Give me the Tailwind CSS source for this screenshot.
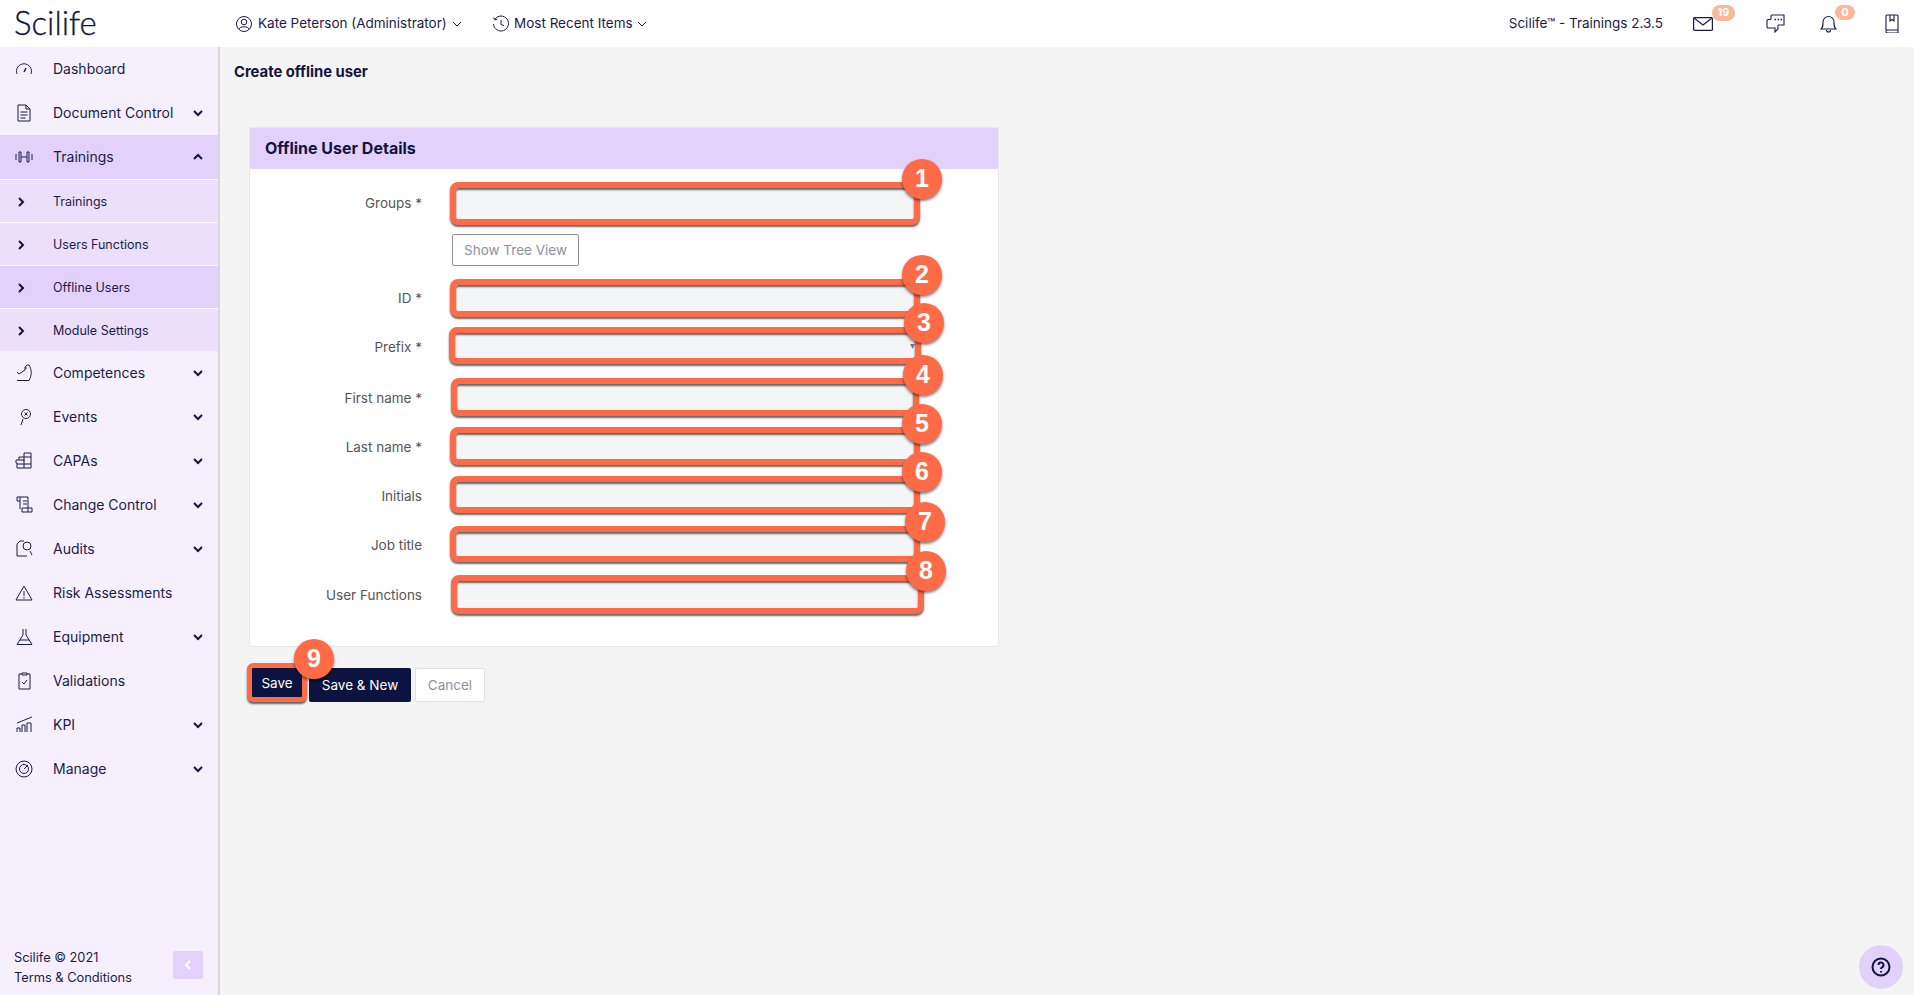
<!DOCTYPE html>
<html lang="en">
<head>
  <meta charset="UTF-8">
  <title>Scilife - Create offline user</title>
  <script src="https://cdn.jsdelivr.net/npm/@tailwindcss/browser@4"></script>
</head>
<body class="h-[995px] w-[1914px] overflow-hidden bg-[#f4f4f4] font-['Inter','Noto_Sans',sans-serif] text-[14px] text-[#1b1b4b]">

  <!-- top bar -->
  <header class="relative flex h-[47px] items-center bg-white">
    <span class="ml-[14px] w-[221px] pb-[3px] font-['Lato',sans-serif] text-[33px] leading-none font-light text-[#0f1338] [-webkit-text-stroke:0.3px_#0f1338]">Scilife</span>

    <svg class="h-[18px] w-[18px]" viewBox="0 0 18 18" fill="none" stroke="#1b1b4b" stroke-width="1"><circle cx="9" cy="9" r="7.5"/><circle cx="9" cy="7" r="2.8"/><path d="M4 14c1-3 9-3 10 0"/></svg>
    <span class="ml-[5px] w-[190px] text-[13.5px] whitespace-nowrap">Kate Peterson (Administrator)</span>
    <svg class="ml-[4px] h-[8px] w-[10px]" viewBox="0 0 10 8" fill="none" stroke="#1b1b4b" stroke-width="1"><path d="M1 2l4 4 4-4"/></svg>

    <svg class="ml-[30px] h-[18px] w-[18px]" viewBox="0 0 18 18" fill="none" stroke="#1b1b4b" stroke-width="1"><path d="M3 4a7.5 7.5 0 1 1-1.5 5"/><path d="M1.5 2.5L3 5l2.5-1"/><path d="M9 5v4.5l3 1"/></svg>
    <span class="ml-[4px] w-[120px] text-[13.5px] whitespace-nowrap">Most Recent Items</span>
    <svg class="ml-[3px] h-[8px] w-[10px]" viewBox="0 0 10 8" fill="none" stroke="#1b1b4b" stroke-width="1"><path d="M1 2l4 4 4-4"/></svg>

    <span class="mr-[30px] ml-auto text-[13.5px] whitespace-nowrap">Scilife™ - Trainings 2.3.5</span>

    <div class="relative mr-[53px] h-[14px] w-[20px]">
      <svg class="h-[14px] w-[20px]" viewBox="0 0 20 14" fill="none" stroke="#1b1b4b" stroke-width="1.2"><rect x=".6" y=".6" width="18.8" height="12.8" rx="1"/><path d="M1 1l9 7 9-7"/></svg>
      <span class="absolute top-[-12px] left-[19px] flex h-[16px] w-[23px] items-center justify-center rounded-full bg-[#fcb69c] text-[11px] font-bold text-white">19</span>
    </div>
    <svg class="mr-[35px] h-[19px] w-[19px]" viewBox="0 0 19 19" fill="none" stroke="#1b1b4b" stroke-width="1.1"><path d="M5 5V2a1 1 0 0 1 1-1h12v10h-6"/><path d="M5 5.5H2a1 1 0 0 0-1 1V13a1 1 0 0 0 1 1h7v4l3-3V11"/><path d="M8.5 5.5H10M11.500 5.5H13M14.5 5.5H16" stroke-width="1.5"/></svg>
    <div class="relative mr-[48px] h-[19px] w-[17px]">
      <svg class="h-[19px] w-[17px]" viewBox="0 0 17 19" fill="none" stroke="#1b1b4b" stroke-width="1.1"><path d="M1 15c2-2 2-3 2-7a5.5 5.5 0 0 1 11 0c0 4 0 5 2 7z"/><path d="M6.5 16a2 2 0 0 0 4 0"/></svg>
      <span class="absolute top-[-9px] left-[15px] flex h-[15px] w-[20px] items-center justify-center rounded-full bg-[#fcb69c] text-[11px] font-bold text-white">0</span>
    </div>
    <svg class="mr-[15px] h-[19px] w-[14px]" viewBox="0 0 14 19" fill="none" stroke="#1b1b4b" stroke-width="1.1"><path d="M1 16V2a1 1 0 0 1 1-1h10a1 1 0 0 1 1 1v14H2.5a1.5 1.5 0 0 0 0 3H13v-3"/><path d="M5 1v6l2-1.500L9 7V1"/></svg>
  </header>

  <div class="flex h-[948px]">
    <!-- sidebar -->
    <aside class="relative w-[220px] shrink-0 border-r-2 border-[#d9d7dc] bg-[#f6f0fe]">
      <nav>
        <a class="flex h-[44px] items-center pb-[1px]">
          <svg class="ml-[15px] h-[16px] w-[18px]" viewBox="0 0 18 16" fill="none" stroke="#1b1b4b" stroke-width="1"><path d="M2 13A7.5 7.5 0 1 1 16 13"/><path d="M9 11l2-4" stroke-width="1.5"/></svg>
          <span class="ml-[20px]">Dashboard</span>
        </a>
        <a class="flex h-[44px] items-center pb-[1px]">
          <svg class="ml-[17px] h-[18px] w-[14px]" viewBox="0 0 14 18" fill="none" stroke="#1b1b4b" stroke-width="1"><path d="M1 1h8l4 4v12H1zM9 1v4h4M3.5 8h7M3.5 11h7M3.5 14h5"/></svg>
          <span class="ml-[22px] w-[140px]">Document Control</span>
          <svg class="h-[8px] w-[10px]" viewBox="0 0 10 8" fill="none" stroke="#10123f" stroke-width="2"><path d="M1 2l4 4 4-4"/></svg>
        </a>
        <a class="flex h-[44px] items-center bg-[#e2d2fb] pb-[1px]">
          <svg class="ml-[15px] h-[12px] w-[18px]" viewBox="0 0 18 12" fill="none" stroke="#1b1b4b" stroke-width="1"><path d="M1 3v6M4 1h2v10H4zM12 1h2v10h-2zM17 3v6M6 6h6"/></svg>
          <span class="ml-[20px] w-[140px]">Trainings</span>
          <svg class="h-[8px] w-[10px]" viewBox="0 0 10 8" fill="none" stroke="#10123f" stroke-width="2"><path d="M1 6l4-4 4 4"/></svg>
        </a>
        <a class="flex h-[43px] items-center border-t border-white/80 bg-[#ecdffb] pt-[2px] text-[12.5px]">
          <svg class="ml-[17px] h-[10px] w-[8px]" viewBox="0 0 8 10" fill="none" stroke="#10123f" stroke-width="2"><path d="M2 1l4 4-4 4"/></svg>
          <span class="ml-[28px]">Trainings</span>
        </a>
        <a class="flex h-[43px] items-center border-t border-white/80 bg-[#ecdffb] pt-[2px] text-[12.5px]">
          <svg class="ml-[17px] h-[10px] w-[8px]" viewBox="0 0 8 10" fill="none" stroke="#10123f" stroke-width="2"><path d="M2 1l4 4-4 4"/></svg>
          <span class="ml-[28px]">Users Functions</span>
        </a>
        <a class="flex h-[43px] items-center border-t border-white/80 bg-[#e2d2fb] pt-[2px] text-[12.5px]">
          <svg class="ml-[17px] h-[10px] w-[8px]" viewBox="0 0 8 10" fill="none" stroke="#10123f" stroke-width="2"><path d="M2 1l4 4-4 4"/></svg>
          <span class="ml-[28px]">Offline Users</span>
        </a>
        <a class="flex h-[43px] items-center border-t border-white/80 bg-[#ecdffb] pt-[2px] text-[12.5px]">
          <svg class="ml-[17px] h-[10px] w-[8px]" viewBox="0 0 8 10" fill="none" stroke="#10123f" stroke-width="2"><path d="M2 1l4 4-4 4"/></svg>
          <span class="ml-[28px]">Module Settings</span>
        </a>
        <a class="flex h-[44px] items-center pb-[1px]">
          <svg class="ml-[16px] h-[18px] w-[17px]" viewBox="0 0 17 18" fill="none" stroke="#1b1b4b" stroke-width="1"><path d="M1 16.5h10M1 8l2 2 3-2 3-2V3l2-2h2M13 1c3 5 3 10 0 15.5h-2M9 4h2"/></svg>
          <span class="ml-[20px] w-[140px]">Competences</span>
          <svg class="h-[8px] w-[10px]" viewBox="0 0 10 8" fill="none" stroke="#10123f" stroke-width="2"><path d="M1 2l4 4 4-4"/></svg>
        </a>
        <a class="flex h-[44px] items-center pb-[1px]">
          <svg class="ml-[19px] h-[18px] w-[12px]" viewBox="0 0 12 18" fill="none" stroke="#1b1b4b" stroke-width="1"><circle cx="7" cy="6" r="4.5"/><path d="M5.5 4.5l3 3M8.5 4.5l-3 3M4 11l-2 6"/></svg>
          <span class="ml-[22px] w-[140px]">Events</span>
          <svg class="h-[8px] w-[10px]" viewBox="0 0 10 8" fill="none" stroke="#10123f" stroke-width="2"><path d="M1 2l4 4 4-4"/></svg>
        </a>
        <a class="flex h-[44px] items-center pb-[1px]">
          <svg class="ml-[15px] h-[17px] w-[17px]" viewBox="0 0 17 17" fill="none" stroke="#1b1b4b" stroke-width="1"><path d="M9 1h7v15H2v-5H1V8h3V5h5zM9 5h7M9 5v4M4 8h5v4H2M9 12h7M9 12v4"/></svg>
          <span class="ml-[21px] w-[140px]">CAPAs</span>
          <svg class="h-[8px] w-[10px]" viewBox="0 0 10 8" fill="none" stroke="#10123f" stroke-width="2"><path d="M1 2l4 4 4-4"/></svg>
        </a>
        <a class="flex h-[44px] items-center pb-[1px]">
          <svg class="ml-[16px] h-[17px] w-[17px]" viewBox="0 0 17 17" fill="none" stroke="#1b1b4b" stroke-width="1"><path d="M1 1h11v15M1 1v4h3M4 1v12M7 5h4M7 8h4M6 12h10v4H6z"/></svg>
          <span class="ml-[20px] w-[140px]">Change Control</span>
          <svg class="h-[8px] w-[10px]" viewBox="0 0 10 8" fill="none" stroke="#10123f" stroke-width="2"><path d="M1 2l4 4 4-4"/></svg>
        </a>
        <a class="flex h-[44px] items-center pb-[1px]">
          <svg class="ml-[16px] h-[17px] w-[17px]" viewBox="0 0 17 17" fill="none" stroke="#1b1b4b" stroke-width="1"><path d="M8 1H4L1 4v12h10"/><circle cx="11" cy="6" r="4"/><path d="M14 11l2 4"/></svg>
          <span class="ml-[20px] w-[140px]">Audits</span>
          <svg class="h-[8px] w-[10px]" viewBox="0 0 10 8" fill="none" stroke="#10123f" stroke-width="2"><path d="M1 2l4 4 4-4"/></svg>
        </a>
        <a class="flex h-[44px] items-center pb-[1px]">
          <svg class="ml-[15px] h-[16px] w-[18px]" viewBox="0 0 18 16" fill="none" stroke="#1b1b4b" stroke-width="1"><path d="M9 1l8 14H1zM9 6v5M9 12v1.5"/></svg>
          <span class="ml-[20px]">Risk Assessments</span>
        </a>
        <a class="flex h-[44px] items-center pb-[1px]">
          <svg class="ml-[16px] h-[18px] w-[17px]" viewBox="0 0 17 18" fill="none" stroke="#1b1b4b" stroke-width="1"><path d="M7 1v6L1 16.5h15L10 7V1M4 12h9"/></svg>
          <span class="ml-[20px] w-[140px]">Equipment</span>
          <svg class="h-[8px] w-[10px]" viewBox="0 0 10 8" fill="none" stroke="#10123f" stroke-width="2"><path d="M1 2l4 4 4-4"/></svg>
        </a>
        <a class="flex h-[44px] items-center pb-[1px]">
          <svg class="ml-[18px] h-[18px] w-[13px]" viewBox="0 0 13 18" fill="none" stroke="#1b1b4b" stroke-width="1"><path d="M4 2H1v15h11V2H9M4 1h5v2H4zM4 10l2 2 3-4"/></svg>
          <span class="ml-[22px]">Validations</span>
        </a>
        <a class="flex h-[44px] items-center pb-[1px]">
          <svg class="ml-[16px] h-[17px] w-[17px]" viewBox="0 0 17 17" fill="none" stroke="#1b1b4b" stroke-width="1"><path d="M1 7l15-6M1 16v-4h3v4M6 16v-7h3v7M11 16V7h4v9"/></svg>
          <span class="ml-[20px] w-[140px]">KPI</span>
          <svg class="h-[8px] w-[10px]" viewBox="0 0 10 8" fill="none" stroke="#10123f" stroke-width="2"><path d="M1 2l4 4 4-4"/></svg>
        </a>
        <a class="flex h-[44px] items-center pb-[1px]">
          <svg class="ml-[15px] h-[18px] w-[18px]" viewBox="0 0 18 18" fill="none" stroke="#1b1b4b" stroke-width="1"><circle cx="9" cy="9" r="8"/><circle cx="9" cy="9" r="4.5"/><path d="M9 9l4-4"/></svg>
          <span class="ml-[20px] w-[140px]">Manage</span>
          <svg class="h-[8px] w-[10px]" viewBox="0 0 10 8" fill="none" stroke="#10123f" stroke-width="2"><path d="M1 2l4 4 4-4"/></svg>
        </a>
      </nav>

      <div class="absolute bottom-[7px] left-[14px] text-[12.8px] leading-[20px]">
        <p>Scilife © 2021</p>
        <p>Terms &amp; Conditions</p>
      </div>
      <button class="absolute bottom-[16px] left-[173px] flex h-[28px] w-[30px] items-center justify-center rounded-[2px] bg-[#e2d2fb]">
        <svg class="h-[10px] w-[8px]" viewBox="0 0 8 10" fill="none" stroke="white" stroke-width="2"><path d="M6 1L2 5l4 4"/></svg>
      </button>
    </aside>

    <!-- main content -->
    <main class="relative flex-1 pl-[14px]">
      <h1 class="mt-[16px] h-[18px] text-[14.8px] leading-[18px] font-bold text-[#14143f]">Create offline user</h1>

      <section class="mt-[46px] ml-[15px] h-[520px] w-[750px] rounded-[2px] border border-[#e8e8ea] bg-white text-[#555558]">
        <h2 class="flex h-[41px] items-center bg-[#e2d2fb] pb-[2px] pl-[15px] text-[16px] font-bold text-[#14143f]">Offline User Details</h2>

        <form class="relative">
          <div class="mt-[13px] flex">
            <label class="w-[172px] pt-[11px] text-right text-[13.5px]">Groups *</label>
            <div class="relative ml-[28px] h-[43px] w-[470px]">
              <div class="h-full rounded-[8px] border-[6px] border-[#ff6b47] bg-[#f4f5f7] shadow-[0_2px_2px_rgba(0,0,0,.6),inset_0_2px_2px_rgba(0,0,0,.6)]"></div>
              <span class="absolute top-[-23px] left-[452px] flex h-[40px] w-[40px] items-center justify-center rounded-full bg-[#ff6b47] font-['Liberation_Sans',sans-serif] text-[25px] font-bold text-white shadow-[0_2px_3px_rgba(0,0,0,.5)]">1</span>
            </div>
          </div>
          <button type="button" class="mt-[9px] ml-[202px] block h-[32px] w-[127px] rounded-[2px] border border-[#8f8fa0] text-[13.5px] text-[#8f8fa0]">Show Tree View</button>

          <div class="mt-[13px] flex">
            <label class="w-[172px] pt-[9px] text-right text-[13.5px]">ID *</label>
            <div class="relative ml-[28px] h-[38px] w-[470px]">
              <div class="h-full rounded-[8px] border-[6px] border-[#ff6b47] bg-[#f4f5f7] shadow-[0_2px_2px_rgba(0,0,0,.6),inset_0_2px_2px_rgba(0,0,0,.6)]"></div>
              <span class="absolute top-[-24px] left-[452px] flex h-[40px] w-[40px] items-center justify-center rounded-full bg-[#ff6b47] font-['Liberation_Sans',sans-serif] text-[25px] font-bold text-white shadow-[0_2px_3px_rgba(0,0,0,.5)]">2</span>
            </div>
          </div>
          <div class="mt-[10px] flex">
            <label class="w-[172px] pt-[10px] text-right text-[13.5px]">Prefix *</label>
            <div class="relative ml-[27px] h-[37px] w-[472px]">
              <div class="flex h-full items-center justify-end rounded-[8px] border-[6px] border-[#ff6b47] bg-[#f4f5f7] text-[10px] text-[#777] shadow-[0_2px_2px_rgba(0,0,0,.6),inset_0_2px_2px_rgba(0,0,0,.6)]">▾</div>
              <span class="absolute top-[-24px] left-[455px] flex h-[40px] w-[40px] items-center justify-center rounded-full bg-[#ff6b47] font-['Liberation_Sans',sans-serif] text-[25px] font-bold text-white shadow-[0_2px_3px_rgba(0,0,0,.5)]">3</span>
            </div>
          </div>
          <div class="mt-[14px] flex">
            <label class="w-[172px] pt-[10px] text-right text-[13.5px]">First name *</label>
            <div class="relative ml-[29px] h-[38px] w-[468px]">
              <div class="h-full rounded-[8px] border-[6px] border-[#ff6b47] bg-[#f4f5f7] shadow-[0_2px_2px_rgba(0,0,0,.6),inset_0_2px_2px_rgba(0,0,0,.6)]"></div>
              <span class="absolute top-[-23px] left-[452px] flex h-[40px] w-[40px] items-center justify-center rounded-full bg-[#ff6b47] font-['Liberation_Sans',sans-serif] text-[25px] font-bold text-white shadow-[0_2px_3px_rgba(0,0,0,.5)]">4</span>
            </div>
          </div>
          <div class="mt-[11px] flex">
            <label class="w-[172px] pt-[10px] text-right text-[13.5px]">Last name *</label>
            <div class="relative ml-[28px] h-[38px] w-[470px]">
              <div class="h-full rounded-[8px] border-[6px] border-[#ff6b47] bg-[#f4f5f7] shadow-[0_2px_2px_rgba(0,0,0,.6),inset_0_2px_2px_rgba(0,0,0,.6)]"></div>
              <span class="absolute top-[-23px] left-[452px] flex h-[40px] w-[40px] items-center justify-center rounded-full bg-[#ff6b47] font-['Liberation_Sans',sans-serif] text-[25px] font-bold text-white shadow-[0_2px_3px_rgba(0,0,0,.5)]">5</span>
            </div>
          </div>
          <div class="mt-[11px] flex">
            <label class="w-[172px] pt-[10px] text-right text-[13.5px]">Initials</label>
            <div class="relative ml-[28px] h-[37px] w-[470px]">
              <div class="h-full rounded-[8px] border-[6px] border-[#ff6b47] bg-[#f4f5f7] shadow-[0_2px_2px_rgba(0,0,0,.6),inset_0_2px_2px_rgba(0,0,0,.6)]"></div>
              <span class="absolute top-[-24px] left-[452px] flex h-[40px] w-[40px] items-center justify-center rounded-full bg-[#ff6b47] font-['Liberation_Sans',sans-serif] text-[25px] font-bold text-white shadow-[0_2px_3px_rgba(0,0,0,.5)]">6</span>
            </div>
          </div>
          <div class="mt-[13px] flex">
            <label class="w-[172px] pt-[9px] text-right text-[13.5px]">Job title</label>
            <div class="relative ml-[28px] h-[36px] w-[470px]">
              <div class="h-full rounded-[8px] border-[6px] border-[#ff6b47] bg-[#f4f5f7] shadow-[0_2px_2px_rgba(0,0,0,.6),inset_0_2px_2px_rgba(0,0,0,.6)]"></div>
              <span class="absolute top-[-24px] left-[455px] flex h-[40px] w-[40px] items-center justify-center rounded-full bg-[#ff6b47] font-['Liberation_Sans',sans-serif] text-[25px] font-bold text-white shadow-[0_2px_3px_rgba(0,0,0,.5)]">7</span>
            </div>
          </div>
          <div class="mt-[13px] flex">
            <label class="w-[172px] pt-[10px] text-right text-[13.5px]">User Functions</label>
            <div class="relative ml-[29px] h-[39px] w-[473px]">
              <div class="h-full rounded-[8px] border-[6px] border-[#ff6b47] bg-[#f4f5f7] shadow-[0_2px_2px_rgba(0,0,0,.6),inset_0_2px_2px_rgba(0,0,0,.6)]"></div>
              <span class="absolute top-[-24px] left-[455px] flex h-[40px] w-[40px] items-center justify-center rounded-full bg-[#ff6b47] font-['Liberation_Sans',sans-serif] text-[25px] font-bold text-white shadow-[0_2px_3px_rgba(0,0,0,.5)]">8</span>
            </div>
          </div>
        </form>
      </section>

      <div class="mt-[16px] ml-[13px] flex items-end">
        <div class="relative h-[39px] w-[60px]">
          <button class="h-full w-full rounded-[6px] border-[5px] border-[#ff6b47] bg-[#0c1340] pt-[2px] text-[13.5px] text-white shadow-[0_2px_2px_rgba(0,0,0,.6)]">Save</button>
          <span class="absolute top-[-24px] left-[47px] flex h-[40px] w-[40px] items-center justify-center rounded-full bg-[#ff6b47] font-['Liberation_Sans',sans-serif] text-[25px] font-bold text-white shadow-[0_2px_3px_rgba(0,0,0,.5)]">9</span>
        </div>
        <button class="ml-[2px] h-[34px] w-[102px] rounded-[2px] bg-[#0c1340] text-[13.5px] text-white">Save &amp; New</button>
        <button class="ml-[4px] h-[34px] w-[70px] rounded-[2px] border border-[#e0e0e0] bg-white text-[13.5px] text-[#8f8fa0]">Cancel</button>
      </div>

      <button class="absolute right-[11px] bottom-[6px] flex h-[44px] w-[44px] items-center justify-center rounded-full bg-[#e2d2fb]">
        <svg class="h-[20px] w-[20px]" viewBox="0 0 20 20" fill="none" stroke="#14143f" stroke-width="2"><circle cx="10" cy="10" r="8.5"/><path d="M7.5 8a2.5 2.5 0 1 1 3.5 2.300c-.7.4-1 .8-1 1.700"/><path d="M10 14v1.5"/></svg>
      </button>
    </main>
  </div>
</body>
</html>
